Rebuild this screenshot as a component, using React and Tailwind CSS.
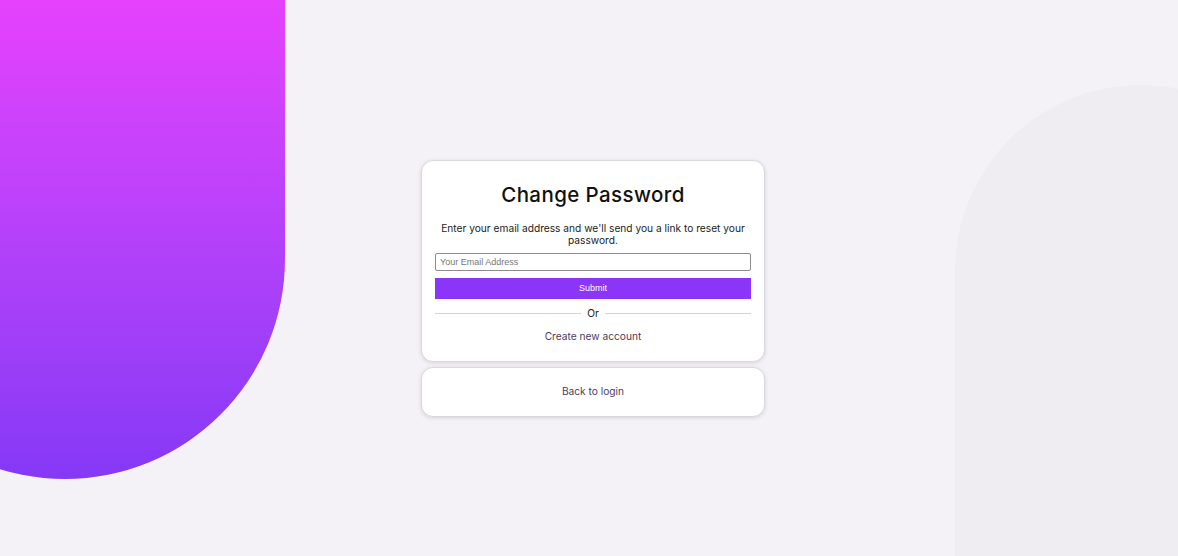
export default function App() {
  return (
    <div className="relative h-[556px] w-full overflow-hidden bg-[#f4f2f7] font-['Inter','Noto_Sans',sans-serif]">
      {/* decorative shapes */}
      <div className="absolute -left-[155px] -top-[40px] h-[519px] w-[440px] rounded-b-[220px] bg-gradient-to-b from-[#ee40fd] to-[#8538f6]" />
      <div className="absolute left-[955px] top-[85px] h-[520px] w-[372px] rounded-t-[186px] bg-[#efedf2]" />

      <div className="relative flex h-full flex-col items-center pl-[8px] pt-[160px]">
        <div className="w-[344px] rounded-xl border border-[#d9d8dc] bg-white px-[13px] pb-[19px] pt-[20px] shadow-[0_1px_4px_rgba(0,0,0,0.12)]">
          <h1 className="text-center text-[20.5px] font-medium leading-[28px] tracking-[0.4px] text-[#111]">
            Change Password
          </h1>
          <p className="mt-[13px] text-center text-[10.2px] leading-[12px] text-[#222]">
            Enter your email address and we'll send you a link to reset your password.
          </p>
          <input
            type="email"
            placeholder="Your Email Address"
            className="mt-[7px] block h-[18px] w-full rounded-[2px] border border-[#8c8c8c] px-[4px] font-['Liberation_Sans',sans-serif] text-[9px] placeholder:text-[#777] outline-none"
          />
          <button className="mt-[7px] block h-[21px] w-full bg-[#8b35f9] font-['Liberation_Sans',sans-serif] text-[9px] text-white">
            Submit
          </button>
          <div className="mt-[8px] flex h-[12px] items-center gap-[6px]">
            <div className="h-px flex-1 bg-[#d4d4d4]" />
            <span className="text-[10.2px] leading-[12px] text-[#222]">Or</span>
            <div className="h-px flex-1 bg-[#d4d4d4]" />
          </div>
          <div className="mt-[11px] text-center text-[10.2px] leading-[12px] text-[#4a3d61]">
            Create new account
          </div>
        </div>
        <div className="mt-[5px] flex h-[50px] w-[344px] items-center justify-center rounded-xl border border-[#d9d8dc] bg-white shadow-[0_1px_4px_rgba(0,0,0,0.12)]">
          <span className="text-[10.2px] text-[#4a3d61]">Back to login</span>
        </div>
      </div>
    </div>
  )
}
